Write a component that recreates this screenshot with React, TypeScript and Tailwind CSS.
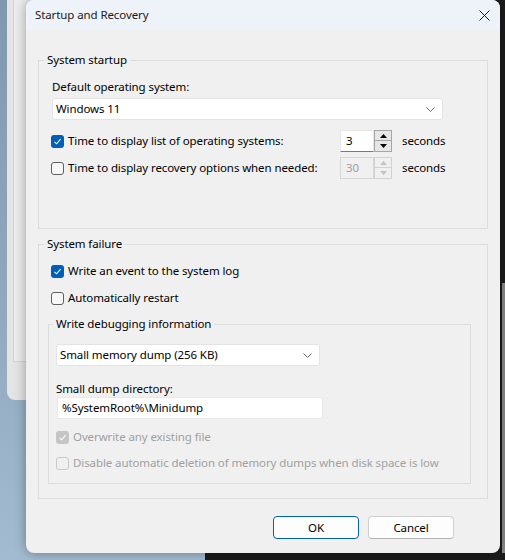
import React from "react";

const font = { fontFamily: '"Noto Sans", "Open Sans", sans-serif' };

type BoxProps = { checked?: boolean; disabled?: boolean };

const CheckBox = ({ checked, disabled }: BoxProps) => {
  if (checked) {
    return (
      <span
        className={`flex h-[13px] w-[13px] shrink-0 items-center justify-center rounded-[3px] ${
          disabled ? "bg-[#c5c5c5]" : "bg-[#005fb8]"
        }`}
      >
        <svg width="9" height="9" viewBox="0 0 9 9" fill="none">
          <path d="M1.5 4.8 L3.6 6.8 L7.6 2.2" stroke="white" strokeWidth="1.1" />
        </svg>
      </span>
    );
  }
  return (
    <span
      className={`h-[13px] w-[13px] shrink-0 rounded-[3px] border ${
        disabled ? "border-[#c8c8c8]" : "border-[#5f5f5f] bg-[#f7f7f7]"
      }`}
    />
  );
};

const Check = ({ label, checked, disabled }: BoxProps & { label: string }) => (
  <div className="flex h-[20px] items-center gap-[4px]">
    <CheckBox checked={checked} disabled={disabled} />
    <span className={disabled ? "text-[#a0a0a0]" : "text-black"}>{label}</span>
  </div>
);

const Chevron = () => (
  <svg width="9" height="5" viewBox="0 0 9 5" fill="none">
    <path d="M0.5 0.5 L4.5 4.5 L8.5 0.5" stroke="#6a6a6a" strokeWidth="1" />
  </svg>
);

const Select = ({ value, className }: { value: string; className: string }) => (
  <div
    className={`flex h-[22px] items-center justify-between rounded-[3px] border border-[#e3e3e3] bg-white pl-[3px] pr-[7px] ${className}`}
  >
    <span>{value}</span>
    <Chevron />
  </div>
);

const Arrow = ({ up, color }: { up?: boolean; color: string }) => (
  <svg width="7" height="4" viewBox="0 0 7 4">
    <path d={up ? "M0 4 L3.5 0 L7 4 Z" : "M0 0 L3.5 4 L7 0 Z"} fill={color} />
  </svg>
);

const Spin = ({ value, disabled }: { value: string; disabled?: boolean }) => {
  const btn = disabled
    ? "border-[#d2d2d2] bg-[#f0f0f0]"
    : "border-[#a5a5a5] bg-[#e6e6e6]";
  const arrow = disabled ? "#c2c2c2" : "#000";
  return (
    <div className="flex h-[22px]">
      <div
        className={`flex w-[34px] items-center pl-[5px] ${
          disabled
            ? "border border-[#d6d6d6] bg-[#f0f0f0] text-[#a0a0a0]"
            : "border border-[#e8e8e8] border-b-[#7a7a7a] bg-white text-black"
        }`}
      >
        {value}
      </div>
      <div className="flex w-[18px] flex-col">
        <div className={`flex h-[11px] items-center justify-center border ${btn}`}>
          <Arrow up color={arrow} />
        </div>
        <div className={`flex h-[11px] items-center justify-center border border-t-0 ${btn}`}>
          <Arrow color={arrow} />
        </div>
      </div>
    </div>
  );
};

export default function App() {
  return (
    <div
      className="relative h-[560px] w-[505px] overflow-hidden bg-gradient-to-b from-[#7f98b1] via-[#8fa7bd] to-[#a3bbd0] text-[11.5px] tracking-[-0.1px] text-black"
      style={font}
    >
      {/* windows behind the dialog */}
      <div className="absolute bottom-0 left-[205px] right-0 top-0 bg-[#1c1c1c]" />
      <div className="absolute right-0 top-[283px] h-[270px] w-[3px] bg-[#8a8a8a]" />
      <div className="absolute left-[7px] top-0 h-[400px] w-[60px] rounded-bl-[8px] bg-[#e4e4e4]">
        <div className="ml-[6px] h-[362px] border-b border-l border-[#d4d4d4] bg-[#ececec]" />
      </div>

      {/* dialog */}
      <div className="absolute left-[26px] top-0 flex h-[553px] w-[474px] flex-col overflow-hidden rounded-[8px] bg-[#f0f0f0] shadow-[0_0_12px_rgba(0,0,0,0.35)]">
        <div className="flex h-[30px] items-center justify-between bg-[#eef3fa] pl-[9px] pr-[10px]">
          <span className="text-[#1a1a1a]">Startup and Recovery</span>
          <svg width="11" height="11" viewBox="0 0 11 11" fill="none">
            <path d="M0.5 0.5 L10.5 10.5 M10.5 0.5 L0.5 10.5" stroke="#1a1a1a" strokeWidth="1" />
          </svg>
        </div>

        <div className="flex flex-col px-[12px] pt-[22px]">
          <fieldset className="border border-[#dcdcdc]">
            <legend className="ml-[5px] px-[3px] leading-[16px]">System startup</legend>
            <div className="flex flex-col pb-[49px] pl-[13px] pt-[11px]">
              <span className="leading-[16px]">Default operating system:</span>
              <Select value="Windows 11" className="mt-[3px] w-[391px]" />
              <div className="-ml-[1px] mt-[10px] flex items-center">
                <div className="w-[289px]">
                  <Check checked label="Time to display list of operating systems:" />
                </div>
                <Spin value="3" />
                <span className="ml-[10px]">seconds</span>
              </div>
              <div className="-ml-[1px] mt-[5px] flex items-center">
                <div className="w-[289px]">
                  <Check label="Time to display recovery options when needed:" />
                </div>
                <Spin value="30" disabled />
                <span className="ml-[10px]">seconds</span>
              </div>
            </div>
          </fieldset>

          <fieldset className="mt-[7px] border border-[#dcdcdc]">
            <legend className="ml-[5px] px-[3px] leading-[16px]">System failure</legend>
            <div className="flex flex-col pb-[14px] pl-[9px] pt-[9px]">
              <div className="pl-[3px]">
                <Check checked label="Write an event to the system log" />
              </div>
              <div className="mt-[7px] pl-[3px]">
                <Check label="Automatically restart" />
              </div>

              <fieldset className="mt-[8px] w-[423px] border border-[#dcdcdc]">
                <legend className="ml-[4px] px-[3px] leading-[16px]">Write debugging information</legend>
                <div className="flex flex-col pb-[10px] pl-[7px] pt-[12px]">
                  <Select value="Small memory dump (256 KB)" className="w-[264px]" />
                  <span className="mt-[15px] leading-[16px]">Small dump directory:</span>
                  <div className="ml-[1px] flex h-[22px] w-[266px] items-center border border-[#e8e8e8] bg-white pl-[4px]">
                    %SystemRoot%\Minidump
                  </div>
                  <div className="mt-[8px]">
                    <Check checked disabled label="Overwrite any existing file" />
                  </div>
                  <div className="mt-[6px]">
                    <Check disabled label="Disable automatic deletion of memory dumps when disk space is low" />
                  </div>
                </div>
              </fieldset>
            </div>
          </fieldset>

          <div className="mr-[34px] mt-[17px] flex justify-end gap-[9px]">
            <button
              type="button"
              className="h-[23px] w-[86px] rounded-[4px] border border-[#005fb8] bg-[#fdfdfd]"
            >
              OK
            </button>
            <button
              type="button"
              className="h-[23px] w-[86px] rounded-[4px] border border-[#d0d0d0] border-b-[#b5b5b5] bg-[#fdfdfd]"
            >
              Cancel
            </button>
          </div>
        </div>
      </div>
    </div>
  );
}
